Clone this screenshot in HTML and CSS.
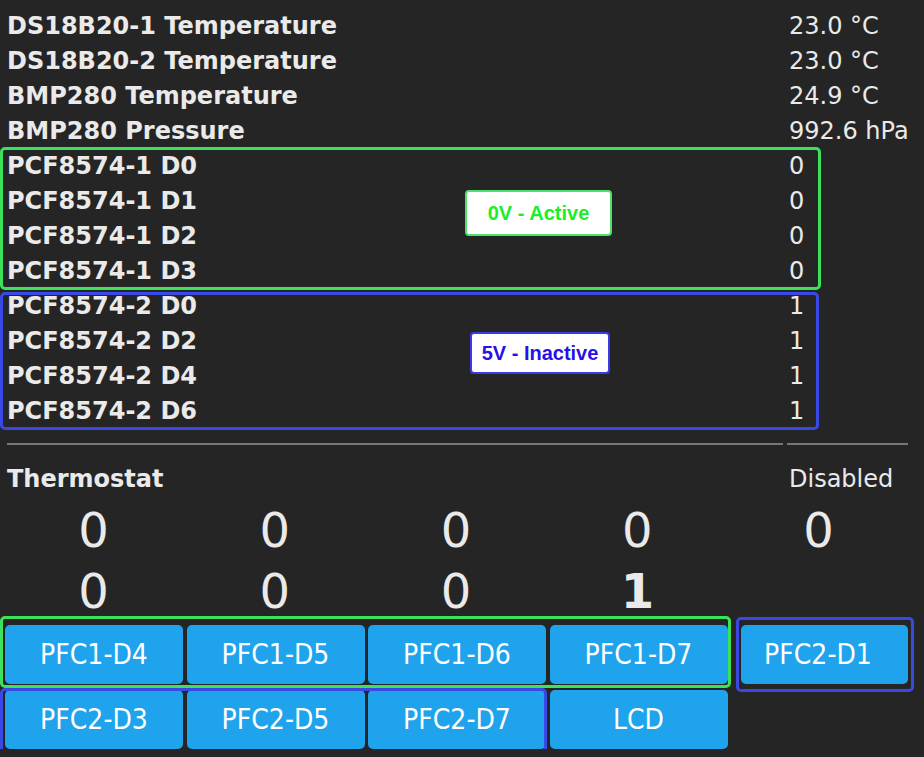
FILE: index.html
```html
<!DOCTYPE html>
<html lang="en">
<head>
<meta charset="UTF-8">
<title>Tasmota - Sensors</title>
<link rel="stylesheet" href="styles.css">
</head>
<body>

<!-- sensor readings -->
<div class="sensors">
  <div class="row"><span class="lbl">DS18B20-1 Temperature</span><span class="val">23.0 °C</span></div>
  <div class="row"><span class="lbl">DS18B20-2 Temperature</span><span class="val">23.0 °C</span></div>
  <div class="row"><span class="lbl">BMP280 Temperature</span><span class="val">24.9 °C</span></div>
  <div class="row"><span class="lbl">BMP280 Pressure</span><span class="val">992.6 hPa</span></div>

  <div class="group active">
    <div class="row"><span class="lbl">PCF8574-1 D0</span><span class="val">0</span></div>
    <div class="row"><span class="lbl">PCF8574-1 D1</span><span class="val">0</span></div>
    <div class="row"><span class="lbl">PCF8574-1 D2</span><span class="val">0</span></div>
    <div class="row"><span class="lbl">PCF8574-1 D3</span><span class="val">0</span></div>
    <div class="tag">0V - Active</div>
  </div>

  <div class="group inactive">
    <div class="row"><span class="lbl">PCF8574-2 D0</span><span class="val">1</span></div>
    <div class="row"><span class="lbl">PCF8574-2 D2</span><span class="val">1</span></div>
    <div class="row"><span class="lbl">PCF8574-2 D4</span><span class="val">1</span></div>
    <div class="row"><span class="lbl">PCF8574-2 D6</span><span class="val">1</span></div>
    <div class="tag">5V - Inactive</div>
  </div>

  <div class="row sep"><hr><hr></div>
  <div class="row thermo"><span class="lbl">Thermostat</span><span class="val">Disabled</span></div>
</div>

<!-- relay states -->
<div class="states">
  <span>0</span><span>0</span><span>0</span><span>0</span><span>0</span>
  <span>0</span><span>0</span><span>0</span><span class="on">1</span>
</div>

<!-- toggle buttons -->
<div class="buttons">
  <button>PFC1-D4</button>
  <button>PFC1-D5</button>
  <button>PFC1-D6</button>
  <button>PFC1-D7</button>
  <button class="last">PFC2-D1</button>
  <button>PFC2-D3</button>
  <button>PFC2-D5</button>
  <button>PFC2-D7</button>
  <button>LCD</button>

  <div class="frame f-green"></div>
  <div class="frame f-blue1"></div>
  <div class="frame f-blue2"></div>
</div>

</body>
</html>
```

FILE: styles.css
```css
html{overflow:hidden;}
body{margin:0;background:#252525;color:#eaeaea;font-family:"DejaVu Sans",Verdana,sans-serif;}

.sensors{padding-top:9px;}
.row{display:grid;grid-template-columns:776px 120px;column-gap:5px;padding-left:7px;line-height:35px;font-size:24px;white-space:nowrap;}
.lbl{font-weight:bold;}
.val{padding-left:1px;}

.group{position:relative;}
.group::before{content:"";position:absolute;left:0;box-sizing:border-box;border:3px solid;border-radius:5px;}
.active::before{top:-2px;width:821px;height:143px;border-color:#3be35c;}
.inactive::before{top:3px;width:819px;height:138px;border-color:#3a48e6;}

.tag{
  position:absolute;box-sizing:border-box;background:#fff;border:2px solid;border-radius:4px;
  font-family:"Liberation Sans",Arial,sans-serif;font-weight:bold;font-size:20px;
  display:flex;align-items:center;justify-content:center;
}
.active .tag{left:465px;top:41px;width:147px;height:46px;color:#19ee2a;border-color:#4ee26a;}
.inactive .tag{left:470px;top:43px;width:140px;height:42px;color:#2a10e8;border-color:#3a3ae8;}

.sep{margin-top:14px;line-height:0;}
.sep hr{margin:0;border:0;border-top:2px solid #777;height:0;}
.sep hr:last-child{margin-left:-1px;width:121px;}
.thermo{margin-top:17px;}

.states{display:grid;grid-template-columns:repeat(5,181.25px);padding-left:3px;margin-top:3px;font-size:48px;line-height:61px;text-align:center;}
.states .on{font-weight:bold;}

.buttons{
  position:relative;display:grid;grid-template-columns:repeat(4,178px) 177px;
  column-gap:3.5px;row-gap:6px;padding:2.5px 0 0 5px;
}
.buttons button{
  height:59px;border:0;border-radius:5px;background:#1fa3ec;color:#fff;padding:0;
  font-family:"DejaVu Sans Condensed","DejaVu Sans",sans-serif;font-stretch:condensed;font-size:28px;
}
.buttons .last{margin-left:10px;padding-right:13px;}

.frame{position:absolute;box-sizing:border-box;border:3px solid;border-radius:5px;pointer-events:none;}
.f-green{left:0;top:-6.5px;width:731px;height:72px;border-color:#3be35c;}
.f-blue1{left:736px;top:-5.5px;width:178px;height:75px;border-color:#3a48e6;}
.f-blue2{left:0;top:65.5px;width:547px;height:68px;border-color:#3a48e6;}
```
